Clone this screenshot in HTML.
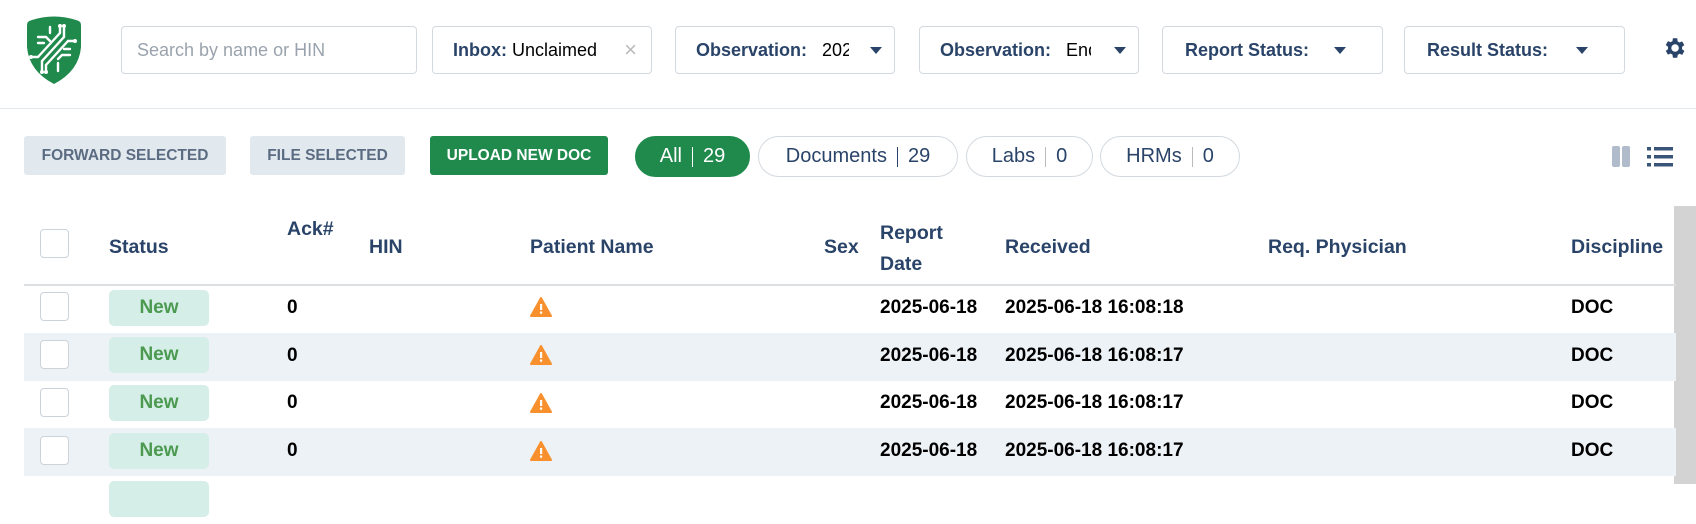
<!DOCTYPE html>
<html><head><meta charset="utf-8"><style>
*{box-sizing:border-box;margin:0;padding:0}
body{width:1696px;height:484px;overflow:hidden;background:#fff;font-family:"Liberation Sans",Arial,sans-serif;position:relative;color:#2a4469}
.a{position:absolute}
.box{position:absolute;top:26px;height:48px;border:1px solid #d3d9df;border-radius:4px;background:#fff;font-size:18px;display:flex;align-items:center;overflow:hidden;white-space:nowrap}
.box b{color:#2a4469;font-weight:bold}
.caret{width:0;height:0;border-left:6px solid transparent;border-right:6px solid transparent;border-top:7px solid #2a4469;position:absolute}
.btn{position:absolute;top:136px;height:39px;border-radius:3px;font-size:15.5px;font-weight:bold;display:flex;align-items:center;justify-content:center;white-space:nowrap}
.pill{position:absolute;top:136px;height:41px;border:1px solid #d3d9df;border-radius:21px;font-size:20px;display:flex;align-items:center;justify-content:center;color:#2a4469}
.pill i{display:inline-block;width:1px;height:20px;background:#2a4469;margin:0 10px;font-style:normal}
.th{position:absolute;font-size:19.5px;font-weight:bold;color:#2a4469;white-space:nowrap}
.cb{position:absolute;width:29px;height:29px;border:1px solid #ccd3da;border-radius:4px;background:#fff;left:40px}
.row{position:absolute;left:24px;width:1652px;height:48px}
.td{position:absolute;font-size:19px;font-weight:bold;color:#000;white-space:nowrap}
.new{position:absolute;left:109px;width:100px;height:36px;background:#d5eee8;border-radius:5px;color:#4b9a50;font-size:19px;font-weight:bold;display:flex;align-items:center;justify-content:center}
</style></head><body>
<svg class="a" style="left:24px;top:15px" width="60" height="69" viewBox="0 0 60 69">
<path d="M3 10 Q3 6 8 5 Q30 -2 52 5 Q57 6 57 10 L57 32 Q55 56 30 69 Q5 56 3 32 Z" fill="#1f8a4c"/>
<g stroke="#fff" stroke-width="2.4" fill="none" stroke-linecap="round">
<path d="M18 46 L40 22 M22 50 L44 26 M14 42 L36 18"/>
<path d="M36 18 V12 M40 22 V12 M44 26 H50 M22 50 V56 M18 46 V56 M14 42 H8"/>
<path d="M14 22 H22 L26 26 M14 28 H20 M46 40 H38 L34 44 M46 34 H40 M26 12 V18 M34 56 V48"/>
</g>
<g fill="#fff"><circle cx="36" cy="11" r="2"/><circle cx="40" cy="11" r="2"/><circle cx="51" cy="26" r="2"/><circle cx="22" cy="57" r="2"/><circle cx="18" cy="57" r="2"/><circle cx="7" cy="42" r="2"/></g>
</svg>
<div class="box" style="left:121px;width:296px;padding-left:15px;color:#9aa3ad;font-size:18px">Search by name or HIN</div>
<div class="box" style="left:432px;width:220px;padding-left:20px"><b>Inbox:</b>&nbsp;<span style="color:#000;display:inline-block;width:88px;overflow:hidden">Unclaimed</span><span class="a" style="right:14px;color:#bbb;font-size:22px">×</span></div>
<div class="box" style="left:675px;width:220px;padding-left:20px"><b>Observation:</b>&nbsp;&nbsp;&nbsp;<span style="color:#000;display:inline-block;width:27px;overflow:hidden">2025</span><span class="caret" style="right:12px;top:20px"></span></div>
<div class="box" style="left:919px;width:220px;padding-left:20px"><b>Observation:</b>&nbsp;&nbsp;&nbsp;<span style="color:#000;display:inline-block;width:25px;overflow:hidden">End</span><span class="caret" style="right:12px;top:20px"></span></div>
<div class="box" style="left:1162px;width:221px;padding-left:22px"><b>Report Status:</b><span class="caret" style="right:36px;top:20px"></span></div>
<div class="box" style="left:1404px;width:221px;padding-left:22px"><b>Result Status:</b><span class="caret" style="right:36px;top:20px"></span></div>
<svg class="a" style="left:1661px;top:35px" width="26" height="26" viewBox="0 0 24 24"><path fill="#2a4469" d="M19.4 13a7.5 7.5 0 0 0 0-2l2.1-1.6-2-3.5-2.5 1a7.6 7.6 0 0 0-1.7-1L15 3h-4l-.4 2.7a7.6 7.6 0 0 0-1.7 1l-2.5-1-2 3.5L6.5 11a7.5 7.5 0 0 0 0 2l-2.1 1.6 2 3.5 2.5-1a7.6 7.6 0 0 0 1.7 1L11 21h4l.4-2.7a7.6 7.6 0 0 0 1.7-1l2.5 1 2-3.5zM13 15.5a3.5 3.5 0 1 1 0-7 3.5 3.5 0 0 1 0 7z"/></svg>
<div class="a" style="left:0;top:108px;width:1696px;height:1px;background:#e3e8ec"></div>
<div class="btn" style="left:24px;width:202px;background:#e2e9ee;color:#5b6c82">FORWARD SELECTED</div>
<div class="btn" style="left:250px;width:155px;background:#e2e9ee;color:#5b6c82">FILE SELECTED</div>
<div class="btn" style="left:430px;width:178px;background:#1f8a4c;color:#fff">UPLOAD NEW DOC</div>
<div class="pill" style="left:635px;width:115px;background:#1f8a4c;border-color:#1f8a4c;color:#fff">All<i style="background:#fff"></i>29</div>
<div class="pill" style="left:758px;width:200px">Documents<i></i>29</div>
<div class="pill" style="left:966px;width:127px">Labs<i style="background:#bbb"></i>0</div>
<div class="pill" style="left:1100px;width:140px">HRMs<i style="background:#bbb"></i>0</div>
<div class="a" style="left:1612px;top:146px;width:8px;height:21px;background:#b0bccb;border-radius:2px"></div>
<div class="a" style="left:1622px;top:146px;width:8px;height:21px;background:#b0bccb;border-radius:2px"></div>
<svg class="a" style="left:1647px;top:147px" width="26" height="20"><g fill="#3b5578"><rect x="0" y="0" width="4" height="3.5"/><rect x="7" y="0" width="19" height="3.5"/><rect x="0" y="8" width="4" height="3.5"/><rect x="7" y="8" width="19" height="3.5"/><rect x="0" y="16" width="4" height="3.5"/><rect x="7" y="16" width="19" height="3.5"/></g></svg>
<div class="a" style="left:1674px;top:206px;width:22px;height:278px;background:#d3d3d3"></div>
<div class="cb" style="top:229px"></div>
<div class="th" style="left:109px;top:236px">Status</div>
<div class="th" style="left:287px;top:218px">Ack#</div>
<div class="th" style="left:369px;top:236px">HIN</div>
<div class="th" style="left:530px;top:236px">Patient Name</div>
<div class="th" style="left:824px;top:236px">Sex</div>
<div class="th" style="left:880px;top:218px;line-height:31px">Report<br>Date</div>
<div class="th" style="left:1005px;top:236px">Received</div>
<div class="th" style="left:1268px;top:236px">Req. Physician</div>
<div class="th" style="left:1571px;top:236px">Discipline</div>
<div class="a" style="left:24px;top:284px;width:1652px;height:2px;background:#dcdfe2"></div>

<div class="row" style="top:286px"></div>
<div class="row" style="top:333px;background:#edf2f6"></div>
<div class="row" style="top:381px"></div>
<div class="row" style="top:428px;background:#edf2f6"></div>
<div class="row" style="top:476px"></div>

<div class="cb" style="top:292px"></div><div class="new" style="top:290px">New</div>
<div class="td" style="left:287px;top:297px">0</div>
<svg class="a" style="left:530px;top:297px" width="22" height="20" viewBox="0 0 22 20"><path d="M11 1 L21 19 H1 Z" fill="#f7902d" stroke="#f7902d" stroke-linejoin="round" stroke-width="2"/><rect x="10" y="7" width="2.2" height="6" fill="#fff"/><rect x="10" y="14.5" width="2.2" height="2.2" fill="#fff"/></svg>
<div class="td" style="left:880px;top:297px">2025-06-18</div><div class="td" style="left:1005px;top:297px">2025-06-18 16:08:18</div><div class="td" style="left:1571px;top:297px">DOC</div>

<div class="cb" style="top:340px"></div><div class="new" style="top:337px">New</div>
<div class="td" style="left:287px;top:345px">0</div>
<svg class="a" style="left:530px;top:345px" width="22" height="20" viewBox="0 0 22 20"><path d="M11 1 L21 19 H1 Z" fill="#f7902d" stroke="#f7902d" stroke-linejoin="round" stroke-width="2"/><rect x="10" y="7" width="2.2" height="6" fill="#fff"/><rect x="10" y="14.5" width="2.2" height="2.2" fill="#fff"/></svg>
<div class="td" style="left:880px;top:345px">2025-06-18</div><div class="td" style="left:1005px;top:345px">2025-06-18 16:08:17</div><div class="td" style="left:1571px;top:345px">DOC</div>

<div class="cb" style="top:388px"></div><div class="new" style="top:385px">New</div>
<div class="td" style="left:287px;top:392px">0</div>
<svg class="a" style="left:530px;top:393px" width="22" height="20" viewBox="0 0 22 20"><path d="M11 1 L21 19 H1 Z" fill="#f7902d" stroke="#f7902d" stroke-linejoin="round" stroke-width="2"/><rect x="10" y="7" width="2.2" height="6" fill="#fff"/><rect x="10" y="14.5" width="2.2" height="2.2" fill="#fff"/></svg>
<div class="td" style="left:880px;top:392px">2025-06-18</div><div class="td" style="left:1005px;top:392px">2025-06-18 16:08:17</div><div class="td" style="left:1571px;top:392px">DOC</div>

<div class="cb" style="top:436px"></div><div class="new" style="top:433px">New</div>
<div class="td" style="left:287px;top:440px">0</div>
<svg class="a" style="left:530px;top:441px" width="22" height="20" viewBox="0 0 22 20"><path d="M11 1 L21 19 H1 Z" fill="#f7902d" stroke="#f7902d" stroke-linejoin="round" stroke-width="2"/><rect x="10" y="7" width="2.2" height="6" fill="#fff"/><rect x="10" y="14.5" width="2.2" height="2.2" fill="#fff"/></svg>
<div class="td" style="left:880px;top:440px">2025-06-18</div><div class="td" style="left:1005px;top:440px">2025-06-18 16:08:17</div><div class="td" style="left:1571px;top:440px">DOC</div>

<div class="new" style="top:481px"></div>
</body></html>
